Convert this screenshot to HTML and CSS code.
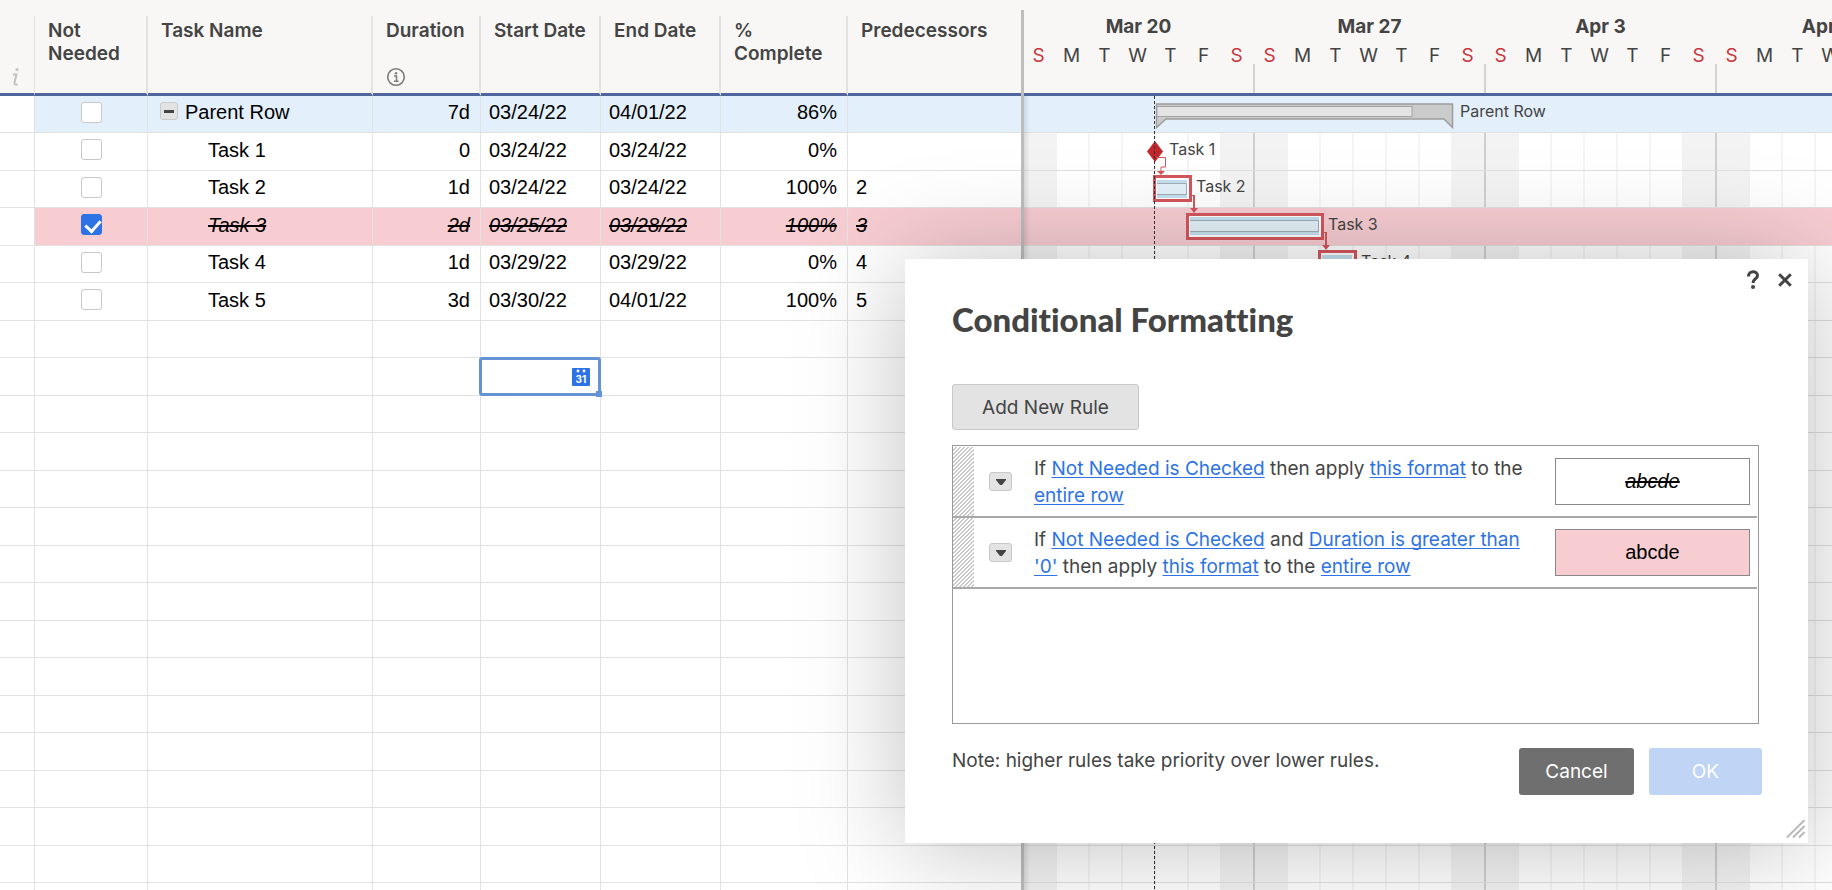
FILE: index.html
```html
<!DOCTYPE html>
<html lang="en">
<head>
    <meta charset="UTF-8">
    <meta name="viewport" content="width=device-width, initial-scale=1.0">
    <title>Conditional Formatting</title>
    <link rel="stylesheet" href="styles.css">
</head>
<body>
    <div class="sheet">
        <!-- Grid -->
        <div class="grid-pane">
            <table class="grid">
                <colgroup>
                    <col class="col-info">
                    <col class="col-check">
                    <col class="col-name">
                    <col class="col-duration">
                    <col class="col-date">
                    <col class="col-date">
                    <col class="col-complete">
                    <col class="col-pred">
                </colgroup>
                <thead>
                    <tr>
                        <th class="info-head">
                            <svg width="8" height="18" viewBox="0 0 8 18" fill="none" stroke="#c2c2c2" stroke-width="2"><circle cx="5" cy="1.5" r="1.5" fill="#c2c2c2" stroke="none"/><path d="M1 6.500h3.500L2.500 14.500q-.4 2 1.300 2h2"/></svg>
                        </th>
                        <th>Not Needed</th>
                        <th>Task Name</th>
                        <th>Duration
                            <svg class="info-icon" width="20" height="20" viewBox="0 0 20 20" fill="none" stroke="#7b7b7b"><circle cx="10" cy="10" r="8.300" stroke-width="1.600"/><path d="M8 9h2.500v5M8 14.200h4.500" stroke-width="1.500"/><circle cx="10" cy="6.300" r="1.200" fill="#7b7b7b" stroke="none"/></svg>
                        </th>
                        <th>Start Date</th>
                        <th>End Date</th>
                        <th>% Complete</th>
                        <th>Predecessors</th>
                    </tr>
                </thead>
                <tbody>
                    <tr class="parent">
                        <td></td>
                        <td class="check"><input type="checkbox" aria-label="Parent Row not needed"></td>
                        <td class="name"><button class="toggle" aria-label="Collapse"></button>Parent Row</td>
                        <td class="num">7d</td>
                        <td>03/24/22</td>
                        <td>04/01/22</td>
                        <td class="num">86%</td>
                        <td></td>
                    </tr>
                    <tr>
                        <td></td>
                        <td class="check"><input type="checkbox" aria-label="Task 1 not needed"></td>
                        <td class="name child">Task 1</td>
                        <td class="num">0</td>
                        <td>03/24/22</td>
                        <td>03/24/22</td>
                        <td class="num">0%</td>
                        <td></td>
                    </tr>
                    <tr>
                        <td></td>
                        <td class="check"><input type="checkbox" aria-label="Task 2 not needed"></td>
                        <td class="name child">Task 2</td>
                        <td class="num">1d</td>
                        <td>03/24/22</td>
                        <td>03/24/22</td>
                        <td class="num">100%</td>
                        <td>2</td>
                    </tr>
                    <tr class="flagged">
                        <td></td>
                        <td class="check"><input type="checkbox" aria-label="Task 3 not needed" checked></td>
                        <td class="name child">Task 3</td>
                        <td class="num">2d</td>
                        <td>03/25/22</td>
                        <td>03/28/22</td>
                        <td class="num">100%</td>
                        <td>3</td>
                    </tr>
                    <tr>
                        <td></td>
                        <td class="check"><input type="checkbox" aria-label="Task 4 not needed"></td>
                        <td class="name child">Task 4</td>
                        <td class="num">1d</td>
                        <td>03/29/22</td>
                        <td>03/29/22</td>
                        <td class="num">0%</td>
                        <td>4</td>
                    </tr>
                    <tr>
                        <td></td>
                        <td class="check"><input type="checkbox" aria-label="Task 5 not needed"></td>
                        <td class="name child">Task 5</td>
                        <td class="num">3d</td>
                        <td>03/30/22</td>
                        <td>04/01/22</td>
                        <td class="num">100%</td>
                        <td>5</td>
                    </tr>
                    <tr><td></td><td></td><td></td><td></td><td></td><td></td><td></td><td></td></tr>
                    <tr>
                        <td></td><td></td><td></td><td></td>
                        <td class="selected">
                            <button class="calendar" aria-label="Pick a date">
                                <svg width="18" height="18" viewBox="0 0 18 18"><rect width="18" height="18" rx="1" fill="#2d73e5"/><circle cx="6" cy="3" r="1.400" fill="#fff"/><circle cx="12" cy="3" r="1.400" fill="#fff"/><text x="9" y="15" text-anchor="middle" class="calendar-day">31</text></svg>
                            </button>
                        </td>
                        <td></td><td></td><td></td>
                    </tr>
                    <tr><td></td><td></td><td></td><td></td><td></td><td></td><td></td><td></td></tr>
                    <tr><td></td><td></td><td></td><td></td><td></td><td></td><td></td><td></td></tr>
                    <tr><td></td><td></td><td></td><td></td><td></td><td></td><td></td><td></td></tr>
                    <tr><td></td><td></td><td></td><td></td><td></td><td></td><td></td><td></td></tr>
                    <tr><td></td><td></td><td></td><td></td><td></td><td></td><td></td><td></td></tr>
                    <tr><td></td><td></td><td></td><td></td><td></td><td></td><td></td><td></td></tr>
                    <tr><td></td><td></td><td></td><td></td><td></td><td></td><td></td><td></td></tr>
                    <tr><td></td><td></td><td></td><td></td><td></td><td></td><td></td><td></td></tr>
                    <tr><td></td><td></td><td></td><td></td><td></td><td></td><td></td><td></td></tr>
                    <tr><td></td><td></td><td></td><td></td><td></td><td></td><td></td><td></td></tr>
                    <tr><td></td><td></td><td></td><td></td><td></td><td></td><td></td><td></td></tr>
                    <tr><td></td><td></td><td></td><td></td><td></td><td></td><td></td><td></td></tr>
                    <tr><td></td><td></td><td></td><td></td><td></td><td></td><td></td><td></td></tr>
                    <tr><td></td><td></td><td></td><td></td><td></td><td></td><td></td><td></td></tr>
                </tbody>
            </table>
        </div>

        <!-- Gantt -->
        <div class="gantt-pane">
            <div class="gantt-head">
                <div class="week">
                    <div class="week-label">Mar 20</div>
                    <div class="days"><span>S</span><span>M</span><span>T</span><span>W</span><span>T</span><span>F</span><span>S</span></div>
                    <div class="tick"></div>
                </div>
                <div class="week">
                    <div class="week-label">Mar 27</div>
                    <div class="days"><span>S</span><span>M</span><span>T</span><span>W</span><span>T</span><span>F</span><span>S</span></div>
                    <div class="tick"></div>
                </div>
                <div class="week">
                    <div class="week-label">Apr 3</div>
                    <div class="days"><span>S</span><span>M</span><span>T</span><span>W</span><span>T</span><span>F</span><span>S</span></div>
                    <div class="tick"></div>
                </div>
                <div class="week">
                    <div class="week-label">Apr 10</div>
                    <div class="days"><span>S</span><span>M</span><span>T</span><span>W</span><span>T</span><span>F</span><span>S</span></div>
                    <div class="tick"></div>
                </div>
            </div>
            <div class="gantt-body">
                <div class="gantt-row parent"></div>
                <div class="gantt-row"></div>
                <div class="gantt-row"></div>
                <div class="gantt-row flagged"></div>
                <div class="gantt-row"></div>
                <div class="gantt-row"></div>
                <div class="gantt-row"></div>
                <div class="gantt-row"></div>
                <div class="gantt-row"></div>
                <div class="gantt-row"></div>
                <div class="gantt-row"></div>
                <div class="gantt-row"></div>
                <div class="gantt-row"></div>
                <div class="gantt-row"></div>
                <div class="gantt-row"></div>
                <div class="gantt-row"></div>
                <div class="gantt-row"></div>
                <div class="gantt-row"></div>
                <div class="gantt-row"></div>
                <div class="gantt-row"></div>
                <div class="gantt-row"></div>
                <div class="gantt-row"></div>
                <svg class="bars" width="808" height="794" viewBox="0 0 808 794">
                    <!-- summary bar -->
                    <path d="M132.500 8H428.500V31.500L420 23H142L132.500 31.500Z" fill="#cbcbcb" stroke="#9d9d9d" stroke-width="1.500"/>
                    <rect x="133" y="10.500" width="255" height="10" fill="#e4e4e4" stroke="#a3a3a3"/>
                    <!-- milestone -->
                    <path d="M131 45l8 10.500-8 10.500-8-10.500z" fill="#c1272d"/>
                    <!-- task bars -->
                    <g stroke="#d4565d" stroke-width="3" fill="#fff">
                        <rect x="130.500" y="80.500" width="36" height="24"/>
                        <rect x="163.500" y="118.500" width="135" height="24"/>
                        <rect x="295.500" y="155.500" width="36" height="24"/>
                    </g>
                    <g fill="#c5dfee">
                        <rect x="133" y="84" width="30" height="18"/>
                        <rect x="166" y="121" width="129" height="18"/>
                        <rect x="298" y="159" width="30" height="18"/>
                    </g>
                    <g fill="#e3f0f7">
                        <rect x="133" y="87" width="30" height="12"/>
                        <rect x="166" y="124" width="129" height="12"/>
                    </g>
                    <path d="M133 87.500h29.500v11H133M166 124.500h128.500v11H166" fill="none" stroke="#9fadb5"/>
                    <!-- dependency links -->
                    <g fill="none" stroke="#d4565d">
                        <path d="M132 61.500h9.500v9.500h-4.500v5"/>
                        <path d="M168 99.500h2.500M300 136.500h2.500"/>
                        <path d="M170 99v14M302 136v14" stroke-width="2"/>
                    </g>
                    <path d="M133 75h8l-4 4zM166 112h8l-4 5zM298 149h8l-4 5z" fill="#d4565d"/>
                    <line class="today" x1="130.500" y1="0" x2="130.500" y2="794"/>
                    <g class="bar-label">
                        <text x="436" y="21">Parent Row</text>
                        <text x="145" y="59">Task 1</text>
                        <text x="172" y="96">Task 2</text>
                        <text x="304" y="134">Task 3</text>
                        <text x="337" y="171">Task 4</text>
                    </g>
                </svg>
            </div>
        </div>
    </div>

    <!-- Dialog -->
    <div class="dialog" role="dialog" aria-labelledby="dialog-title">
        <div class="dialog-tools">
            <button class="tool" aria-label="Help">
                <svg width="14" height="20" viewBox="0 0 14 20" fill="none" stroke="#444" stroke-width="3"><path d="M2.500 6.500C2.500 0 11.500.5 11.500 5.500c0 3.500-4.500 3-4.500 7.500"/><circle cx="7" cy="17" r="2" fill="#444" stroke="none"/></svg>
            </button>
            <button class="tool" aria-label="Close">
                <svg width="14" height="14" viewBox="0 0 14 14" stroke="#444" stroke-width="3"><path d="M1.200 1.200l11.600 11.600M12.800 1.200L1.200 12.800"/></svg>
            </button>
        </div>
        <div class="dialog-body">
            <h1 id="dialog-title">Conditional Formatting</h1>
            <button class="btn add-rule">Add New Rule</button>
            <div class="rules">
                <div class="rule">
                    <div class="handle"></div>
                    <button class="rule-menu" aria-label="Rule options"><svg width="10" height="6" viewBox="0 0 10 6"><path d="M0 0h10v1L6 6H4L0 1z" fill="#444"/></svg></button>
                    <p>If <a href="#">Not Needed is Checked</a> then apply <a href="#">this format</a> to the <a href="#">entire row</a></p>
                    <div class="preview struck">abcde</div>
                </div>
                <div class="rule">
                    <div class="handle"></div>
                    <button class="rule-menu" aria-label="Rule options"><svg width="10" height="6" viewBox="0 0 10 6"><path d="M0 0h10v1L6 6H4L0 1z" fill="#444"/></svg></button>
                    <p>If <a href="#">Not Needed is Checked</a> and <a href="#">Duration is greater than '0'</a> then apply <a href="#">this format</a> to the <a href="#">entire row</a></p>
                    <div class="preview pink">abcde</div>
                </div>
            </div>
            <div class="dialog-footer">
                <span class="note">Note: higher rules take priority over lower rules.</span>
                <button class="btn cancel">Cancel</button>
                <button class="btn ok" disabled>OK</button>
            </div>
        </div>
        <svg class="resize" width="19" height="18" viewBox="0 0 19 18" stroke="#b8b8b8" stroke-width="2"><path d="M1 17.500L18.500 0M7 17.500L18.500 6M13 17.500l5.500-5.500"/></svg>
    </div>
</body>
</html>
```
FILE: styles.css
```css
* {
    margin: 0;
    padding: 0;
    box-sizing: border-box;
}

body {
    font-family: Inter, sans-serif;
    font-size: 19px;
    color: #444;
    background: #fff;
    overflow: hidden;
}

button {
    font-family: inherit;
    font-size: inherit;
    cursor: pointer;
}

.sheet {
    display: flex;
    height: 100vh;
    padding-top: 10px;
    background: #f8f7f5;
    overflow: hidden;
}

/* Grid */
.grid-pane {
    flex: none;
    padding-top: 6px;
}

.grid {
    width: 1021px;
    table-layout: fixed;
    border-collapse: separate;
    border-spacing: 0;
}

.col-info { width: 35px; }
.col-check { width: 113px; }
.col-name { width: 225px; }
.col-duration { width: 108px; }
.col-date { width: 120px; }
.col-complete { width: 127px; }
.col-pred { width: 173px; }

.grid th {
    height: 80px;
    padding: 3px 0 0 13px;
    font-weight: 600;
    line-height: 23px;
    text-align: left;
    vertical-align: top;
    border-right: 2px solid #e3e3e3;
    border-bottom: 3px solid #50659c;
}

.grid th:last-child,
.grid td:last-child {
    border-right: none;
}

.grid .info-head {
    padding: 0 0 7px 12px;
    line-height: 0;
    vertical-align: bottom;
    border-right-width: 1px;
}

.info-icon {
    display: block;
    margin-top: 25px;
}

.grid td {
    height: 37px;
    padding: 0 8px;
    font-family: "Liberation Sans", Arial, sans-serif;
    font-size: 20px;
    line-height: 32px;
    color: #000;
    vertical-align: top;
    background: #fff;
    border-right: 1px solid #e2e2e2;
    border-bottom: 1px solid #e2e2e2;
}

.grid tr:nth-child(even) td {
    height: 38px;
    line-height: 34px;
}

.grid .num {
    padding-right: 10px;
    text-align: right;
}

.grid .check {
    text-align: center;
}

.grid .name {
    padding-left: 12px;
}

.grid .child {
    padding-left: 60px;
}

.grid .parent td:not(:first-child),
.gantt-row.parent {
    background: #e3f0fc;
}

.grid .flagged td:not(:first-child),
.gantt-row.flagged {
    background: #f7cdd2;
}

.grid .flagged td {
    font-style: italic;
    text-decoration: line-through;
    text-decoration-thickness: 2px;
}

.check input {
    appearance: none;
    width: 21px;
    height: 21px;
    margin-top: 6px;
    vertical-align: top;
    background: #fff;
    border: 1px solid #c8c8c8;
    border-radius: 3px;
}

.check input:checked {
    background: #2d73e5;
    border-color: #2d73e5;
}

.check input:checked::after {
    content: "";
    display: block;
    width: 7px;
    height: 12px;
    margin: 2px 0 0 6px;
    border: solid #fff;
    border-width: 0 3px 3px 0;
    transform: rotate(42deg);
}

.toggle {
    width: 18px;
    height: 18px;
    margin: 6px 7px 0 0;
    padding: 0 3px;
    vertical-align: top;
    background: #e3e3e3;
    border: 1px solid #cacaca;
    border-radius: 3px;
}

.toggle::before {
    content: "";
    display: block;
    height: 3px;
    background: #444;
}

.grid .selected {
    position: relative;
    text-align: right;
    padding-right: 10px;
}

.selected::before {
    content: "";
    position: absolute;
    inset: -1px -1px -1px -2px;
    border: 3px solid #6494d3;
    border-radius: 3px;
}

.selected::after {
    content: "";
    position: absolute;
    right: -2px;
    bottom: -2px;
    width: 6px;
    height: 6px;
    background: #6494d3;
}

.calendar {
    position: relative;
    width: 18px;
    height: 18px;
    line-height: 0;
    vertical-align: middle;
    background: none;
    border: none;
}

.calendar-day {
    font: 700 10px Inter, sans-serif;
    fill: #fff;
}

/* Gantt */
.gantt-pane {
    flex: 1;
    min-width: 0;
    overflow: hidden;
    border-left: 3px solid #bdbdbd;
}

.gantt-head {
    display: flex;
    height: 86px;
    overflow: hidden;
    border-bottom: 3px solid #50659c;
}

.week {
    display: flex;
    flex-direction: column;
    flex: none;
    width: 231px;
}

.week-label,
.days {
    margin-left: -2px;
}

.week-label {
    padding-top: 5px;
    font-weight: 700;
    line-height: 24px;
    text-align: center;
}

.days {
    display: flex;
    padding-top: 5px;
}

.days span {
    flex: none;
    width: 33px;
    line-height: 24px;
    text-align: center;
}

.days span:first-child,
.days span:last-child {
    color: #c8373f;
}

.tick {
    flex: 1;
    margin-top: -4px;
    border-right: 2px solid #d2d2d2;
}

.gantt-body {
    position: relative;
    background-color: #fff;
    background-image: linear-gradient(to right,
        #f3f3f3 33px, #fff 33px, #fff 64px,
        #f5f5f5 64px, #f5f5f5 66px, #fff 66px, #fff 97px,
        #f5f5f5 97px, #f5f5f5 99px, #fff 99px, #fff 130px,
        #f5f5f5 130px, #f5f5f5 132px, #fff 132px, #fff 163px,
        #f5f5f5 163px, #f5f5f5 165px, #fff 165px, #fff 196px,
        #f3f3f3 196px, #f3f3f3 229px, #cfcfcf 229px);
    background-size: 231px 100%;
}

/* soft edge beside the splitter */
.gantt-body::before {
    content: "";
    position: absolute;
    inset: 0 auto 0 0;
    width: 6px;
    background: linear-gradient(to right, rgba(0,0,0,0.1), transparent);
}

.gantt-row {
    height: 37px;
    border-bottom: 1px solid #e0e0e0;
}

.gantt-row:nth-child(even) {
    height: 38px;
}

.bars {
    position: absolute;
    top: 0;
    left: 0;
}

.bar-label {
    font-size: 16px;
    fill: #444;
}

.today {
    stroke: #333;
    stroke-dasharray: 3 2;
}

/* Dialog */
.dialog {
    position: absolute;
    top: 259px;
    right: 24px;
    width: 903px;
    padding-bottom: 48px;
    background: #fff;
    box-shadow: 0 4px 100px rgba(0,0,0,0.25);
}

.dialog-tools {
    display: flex;
    justify-content: flex-end;
    height: 42px;
    padding-right: 7px;
}

.tool {
    display: flex;
    align-items: center;
    justify-content: center;
    width: 32px;
    background: none;
    border: none;
}

.dialog-body {
    padding: 0 46px 0 47px;
}

.dialog h1 {
    margin-bottom: 47px;
    font-family: Lato, sans-serif;
    font-size: 33px;
    font-weight: 900;
    font-variant-ligatures: none;
    line-height: 36px;
}

.btn {
    height: 47px;
    color: #444;
    border: none;
    border-radius: 3px;
}

.add-rule {
    display: block;
    width: 187px;
    height: 46px;
    margin-bottom: 15px;
    background: #e3e3e3;
    border: 1px solid #c8c8c8;
}

.rules {
    height: 279px;
    margin-right: 3px;
    padding: 1px 1px 0 0;
    border: 1px solid #999;
}

.rule {
    display: flex;
    align-items: center;
    height: 71px;
    padding-right: 7px;
    border-bottom: 2px solid #a8a8a8;
}

.handle {
    align-self: stretch;
    width: 21px;
    background: linear-gradient(135deg, #fff 25%, #c8c8c8 25% 50%, #fff 50% 75%, #c8c8c8 75%);
    background-size: 4px 4px;
}

.rule-menu {
    display: flex;
    align-items: center;
    justify-content: center;
    width: 23px;
    height: 19px;
    margin: 0 22px 0 15px;
    background: #e3e3e3;
    border: 1px solid #c8c8c8;
    border-radius: 3px;
}

.rule p {
    flex: 1;
    line-height: 27px;
}

.rule a {
    color: #2d73e5;
    text-underline-offset: 2px;
    text-decoration-skip-ink: none;
}

.preview {
    width: 195px;
    height: 47px;
    margin-left: 12px;
    font-family: "Liberation Sans", Arial, sans-serif;
    font-size: 20px;
    line-height: 45px;
    color: #000;
    text-align: center;
    border: 1px solid #888;
}

.preview.struck {
    font-style: italic;
    text-decoration: line-through;
    text-decoration-thickness: 2px;
}

.preview.pink {
    background: #f7cdd2;
}

.dialog-footer {
    display: flex;
    gap: 15px;
    margin-top: 24px;
}

.note {
    flex: 1;
    line-height: 25px;
}

.cancel {
    width: 115px;
    color: #fff;
    background: #6f6f6f;
}

.ok {
    width: 113px;
    color: #fff;
    background: #c0d4f6;
}

.resize {
    position: absolute;
    right: 3px;
    bottom: 5px;
}
```
